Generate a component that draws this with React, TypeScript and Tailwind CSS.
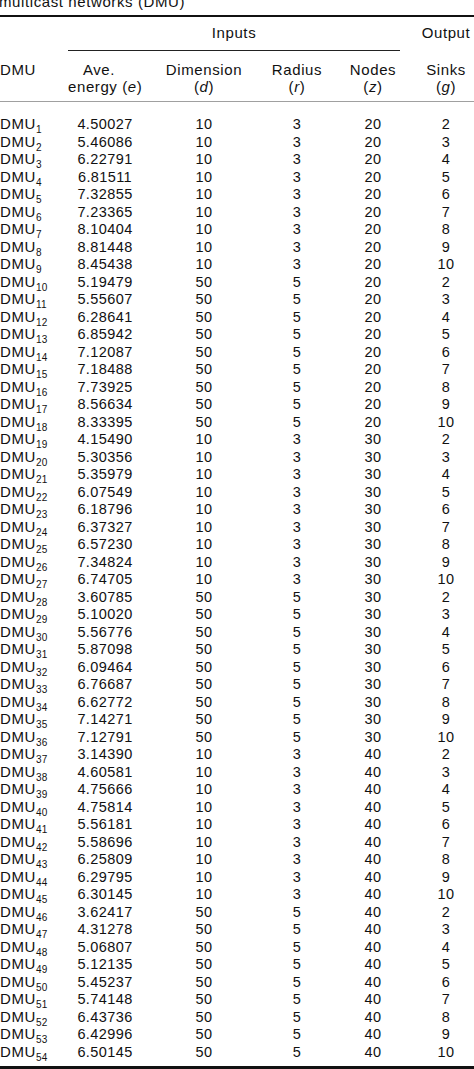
import React from "react";

const energies = [
  "4.50027","5.46086","6.22791","6.81511","7.32855","7.23365","8.10404","8.81448","8.45438",
  "5.19479","5.55607","6.28641","6.85942","7.12087","7.18488","7.73925","8.56634","8.33395",
  "4.15490","5.30356","5.35979","6.07549","6.18796","6.37327","6.57230","7.34824","6.74705",
  "3.60785","5.10020","5.56776","5.87098","6.09464","6.76687","6.62772","7.14271","7.12791",
  "3.14390","4.60581","4.75666","4.75814","5.56181","5.58696","6.25809","6.29795","6.30145",
  "3.62417","4.31278","5.06807","5.12135","5.45237","5.74148","6.43736","6.42996","6.50145",
];

const rows = energies.map((e, i) => {
  const group = Math.floor(i / 9);
  const small = group % 2 === 0;
  return {
    n: i + 1,
    e,
    d: small ? "10" : "50",
    r: small ? "3" : "5",
    z: String(20 + 10 * Math.floor(group / 2)),
    g: String((i % 9) + 2),
  };
});

const cols = "grid grid-cols-[68px_74px_124px_62px_90px_56px]";

export default function App() {
  return (
    <div
      className="relative w-[474px] h-[1069px] overflow-hidden bg-white text-[#111111]"
      style={{ fontFamily: '"Liberation Sans", Arial, sans-serif' }}
    >
      <div className="h-[15px] overflow-hidden">
        <div className="mt-[-6px] ml-[-1px] text-[15px] leading-[15px] tracking-[0.6px] whitespace-nowrap">
          multicast networks (DMU)
        </div>
      </div>
      <div className="h-[2px] bg-[#111111]" />
      {/* Group header */}
      <div className="flex h-[33px] items-center text-[15px] tracking-[0.6px]">
        <div className="w-[68px]" />
        <div className="w-[332px] text-center">Inputs</div>
        <div className="w-[74px] text-center pl-[18px]">Output</div>
      </div>
      <div className="flex h-[1px]">
        <div className="w-[68px]" />
        <div className="w-[332px] bg-[#222222]" />
      </div>
      {/* Column header */}
      <div className={`${cols} h-[50px] pt-[10px] text-[15px] leading-[17px] tracking-[0.6px]`}>
        <div>DMU</div>
        <div className="text-center">
          <div className="pr-[12px]">Ave.</div>
          <div className="whitespace-nowrap">energy (<i>e</i>)</div>
        </div>
        <div className="text-center">
          <div>Dimension</div>
          <div>(<i>d</i>)</div>
        </div>
        <div className="text-center">
          <div>Radius</div>
          <div>(<i>r</i>)</div>
        </div>
        <div className="text-center">
          <div>Nodes</div>
          <div>(<i>z</i>)</div>
        </div>
        <div className="text-center">
          <div>Sinks</div>
          <div>(<i>g</i>)</div>
        </div>
      </div>
      <div className="h-[1px] bg-[#a0a0a0]" />
      <div className="pt-[13px]">
        {rows.map((row) => (
          <div
            key={row.n}
            className={`${cols} h-[17.5px] items-center text-[14.5px] leading-[17.5px] tracking-[0.4px]`}
          >
            <div className="whitespace-nowrap text-[15px] tracking-[0.6px]">
              DMU
              <span className="relative top-[4px] text-[10px] tracking-[0.2px]">{row.n}</span>
            </div>
            <div className="text-center">{row.e}</div>
            <div className="text-center">{row.d}</div>
            <div className="text-center">{row.r}</div>
            <div className="text-center">{row.z}</div>
            <div className="text-center">{row.g}</div>
          </div>
        ))}
      </div>
      <div className="absolute left-0 right-0 bottom-0 h-[3px] bg-[#111111]" />
    </div>
  );
}
